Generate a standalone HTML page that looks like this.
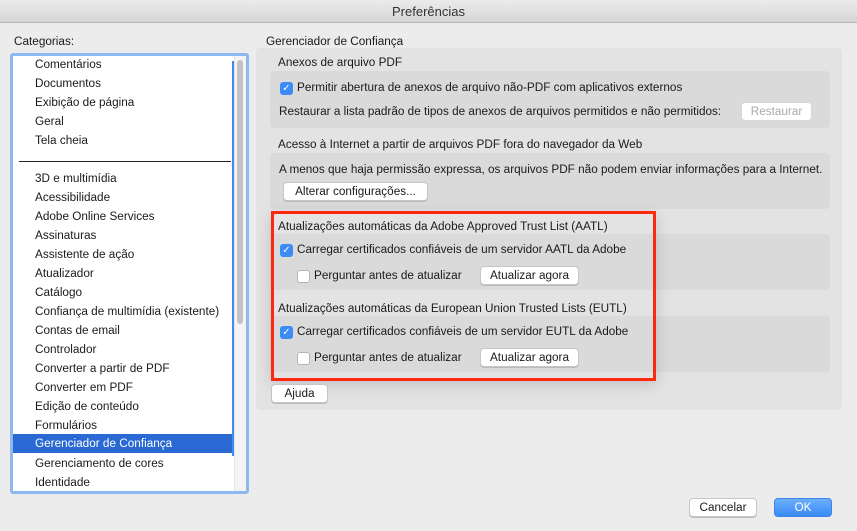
<!DOCTYPE html>
<html><head><meta charset="utf-8"><style>
*{box-sizing:border-box;margin:0;padding:0}
body{width:857px;height:531px;background:#ececec;font-family:"Liberation Sans",sans-serif;font-size:11.75px;color:#1a1a1a;position:relative;overflow:hidden}
.a{position:absolute;white-space:nowrap}
.title{left:0;top:0;width:857px;height:23px;background:linear-gradient(#ebebeb,#d6d6d6);border-bottom:1px solid #b8b8b8;text-align:center;line-height:23px;font-size:13px;color:#333}
.list{left:10px;top:53px;width:239px;height:441px;border:3px solid #8db8f0;border-radius:3px;background:#fff}
.item{position:absolute;left:22px;height:19px;line-height:19px}
.sel{left:0;width:220px;padding-left:22px;background:#2a69d3;color:#fff}
.panel{left:256px;top:48px;width:586px;height:362px;background:#e3e3e3;border-radius:4px}
.box{left:270px;width:560px;background:#dadada;border-radius:4px}
.btn{background:#fff;border:1px solid #c6c6c6;border-radius:4px;text-align:center;box-shadow:0 1px 0 #bbb;height:19px;line-height:17px}
.cb{width:13px;height:13px;border-radius:3px}
.on{background:#3d8bf5;color:#fff;font-size:10px;line-height:13px;text-align:center}
.off{background:#fff;border:1px solid #b5b5b5}
</style></head><body>
<div class="a title">Preferências</div>
<div class="a" style="left:14px;top:35px">Categorias:</div>
<div class="a list">
 <div class="item" style="top:-1px">Comentários</div>
 <div class="item" style="top:18px">Documentos</div>
 <div class="item" style="top:37px">Exibição de página</div>
 <div class="item" style="top:56px">Geral</div>
 <div class="item" style="top:75px">Tela cheia</div>
 <div class="a" style="left:6px;top:105px;width:212px;height:1px;background:#222"></div>
 <div class="item" style="top:113px">3D e multimídia</div>
 <div class="item" style="top:132px">Acessibilidade</div>
 <div class="item" style="top:151px">Adobe Online Services</div>
 <div class="item" style="top:170px">Assinaturas</div>
 <div class="item" style="top:189px">Assistente de ação</div>
 <div class="item" style="top:208px">Atualizador</div>
 <div class="item" style="top:227px">Catálogo</div>
 <div class="item" style="top:246px">Confiança de multimídia (existente)</div>
 <div class="item" style="top:265px">Contas de email</div>
 <div class="item" style="top:284px">Controlador</div>
 <div class="item" style="top:303px">Converter a partir de PDF</div>
 <div class="item" style="top:322px">Converter em PDF</div>
 <div class="item" style="top:341px">Edição de conteúdo</div>
 <div class="item" style="top:360px">Formulários</div>
 <div class="item sel" style="top:378px">Gerenciador de Confiança</div>
 <div class="item" style="top:398px">Gerenciamento de cores</div>
 <div class="item" style="top:417px">Identidade</div>
 <div class="a" style="left:219px;top:5px;width:3px;height:395px;background:#3d8bf5"></div>
 <div class="a" style="left:219px;top:398px;width:10px;height:2px;background:#3d8bf5"></div>
 <div class="a" style="left:221px;top:0;width:12px;height:435px;background:#f4f4f4;border-left:1px solid #e4e4e4"></div>
 <div class="a" style="left:224px;top:4px;width:6px;height:264px;background:#c2c2c2;border-radius:3px"></div>
</div>
<div class="a" style="left:266px;top:35px">Gerenciador de Confiança</div>
<div class="a panel"></div>
<div class="a" style="left:278px;top:56px">Anexos de arquivo PDF</div>
<div class="a box" style="top:71px;height:57px"></div>
<div class="a cb on" style="left:280px;top:82px">✓</div>
<div class="a" style="left:297px;top:81px">Permitir abertura de anexos de arquivo não-PDF com aplicativos externos</div>
<div class="a" style="left:279px;top:105px">Restaurar a lista padrão de tipos de anexos de arquivos permitidos e não permitidos:</div>
<div class="a btn" style="left:741px;top:102px;width:71px;color:#aaa;box-shadow:none;border-color:#d8d8d8">Restaurar</div>
<div class="a" style="left:278px;top:138px">Acesso à Internet a partir de arquivos PDF fora do navegador da Web</div>
<div class="a box" style="top:153px;height:56px"></div>
<div class="a" style="left:279px;top:163px">A menos que haja permissão expressa, os arquivos PDF não podem enviar informações para a Internet.</div>
<div class="a btn" style="left:283px;top:182px;width:145px">Alterar configurações...</div>
<div class="a box" style="top:234px;height:56px"></div>
<div class="a box" style="top:316px;height:56px"></div>
<div class="a" style="left:271px;top:211px;width:385px;height:170px;border:3px solid #fa2a10;box-shadow:0 4px 14px rgba(0,0,0,.15)"></div>
<div class="a" style="left:278px;top:220px">Atualizações automáticas da Adobe Approved Trust List (AATL)</div>
<div class="a cb on" style="left:280px;top:244px">✓</div>
<div class="a" style="left:297px;top:243px">Carregar certificados confiáveis de um servidor AATL da Adobe</div>
<div class="a cb off" style="left:297px;top:270px"></div>
<div class="a" style="left:314px;top:269px">Perguntar antes de atualizar</div>
<div class="a btn" style="left:480px;top:266px;width:99px">Atualizar agora</div>
<div class="a" style="left:278px;top:302px">Atualizações automáticas da European Union Trusted Lists (EUTL)</div>
<div class="a cb on" style="left:280px;top:326px">✓</div>
<div class="a" style="left:297px;top:325px">Carregar certificados confiáveis de um servidor EUTL da Adobe</div>
<div class="a cb off" style="left:297px;top:352px"></div>
<div class="a" style="left:314px;top:351px">Perguntar antes de atualizar</div>
<div class="a btn" style="left:480px;top:348px;width:99px">Atualizar agora</div>
<div class="a btn" style="left:271px;top:384px;width:57px">Ajuda</div>
<div class="a btn" style="left:689px;top:498px;width:68px">Cancelar</div>
<div class="a btn" style="left:774px;top:498px;width:58px;background:linear-gradient(#6cb0fb,#3a8af5);border-color:#3a84ee;color:#fff;box-shadow:none">OK</div>
</body></html>
